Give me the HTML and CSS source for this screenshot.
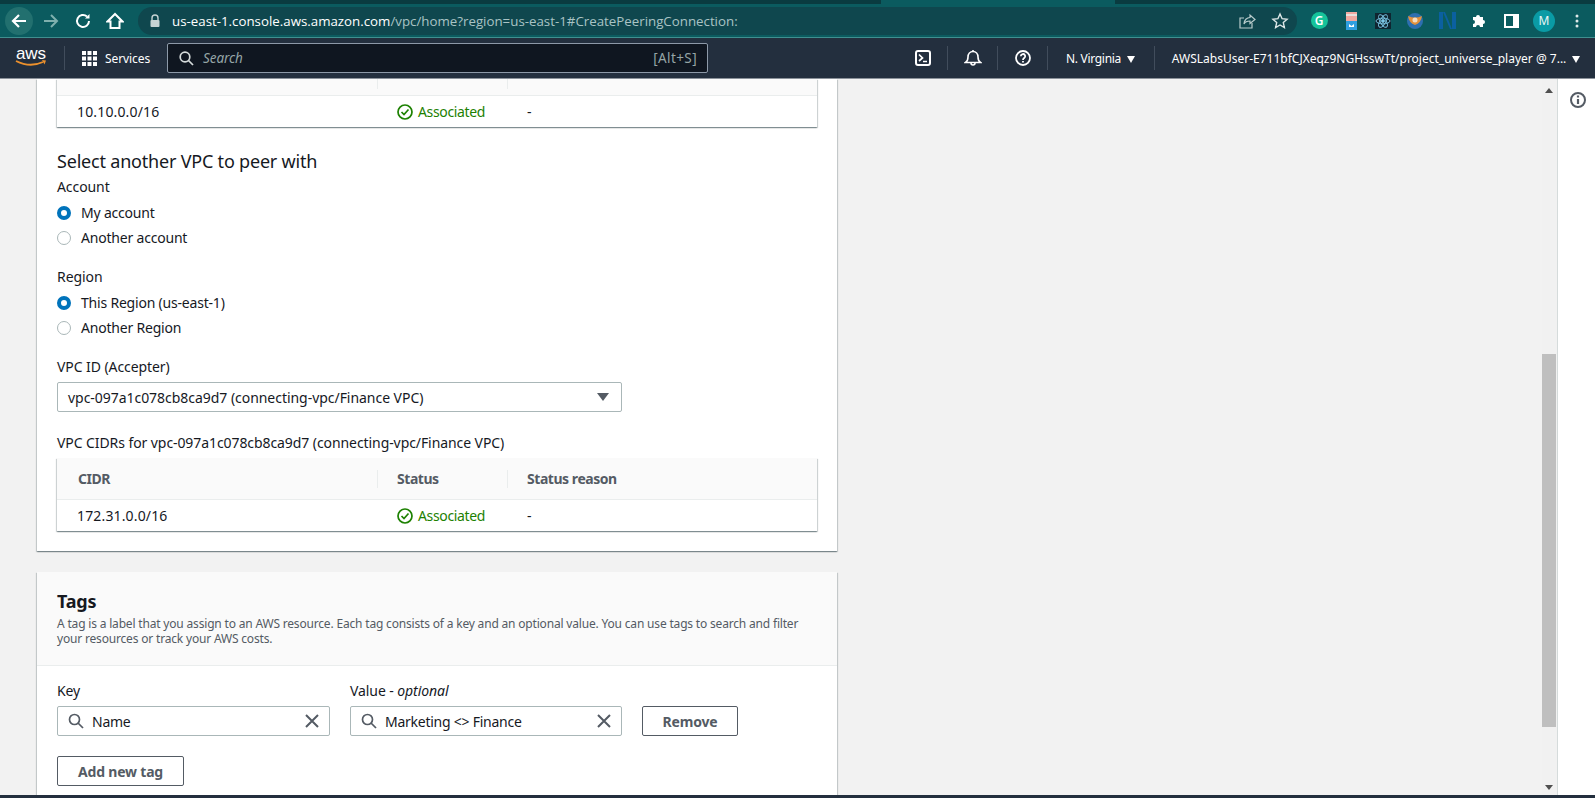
FILE: index.html
```html
<!DOCTYPE html>
<html lang="en">
<head>
    <meta charset="UTF-8">
    <title>Create peering connection</title>
    <link rel="stylesheet" href="styles.css">
</head>
<body>
    <!-- Browser toolbar -->
    <div class="tab-strip"><div class="tab-active"></div></div>
    <div class="browser-bar">
        <div class="nav-btns">
            <span class="nav-btn nav-btn-active">
                <svg width="18" height="18" viewBox="0 0 18 18" fill="none" stroke="#fff" stroke-width="2.200"><path d="M16 9H3M9 3L3 9l6 6"/></svg>
            </span>
            <span class="nav-btn">
                <svg width="18" height="18" viewBox="0 0 18 18" fill="none" stroke="#7fb0ae" stroke-width="2"><path d="M2 9h13M9 3l6 6-6 6"/></svg>
            </span>
            <span class="nav-btn">
                <svg width="18" height="18" viewBox="0 0 18 18" fill="none" stroke="#fff" stroke-width="2"><path d="M15 9a6 6 0 1 1-2-4.500"/><path d="M15.500 2v4.500H11" fill="#fff" stroke="none"/></svg>
            </span>
            <span class="nav-btn">
                <svg width="18" height="18" viewBox="0 0 18 18" fill="none" stroke="#fff" stroke-width="2"><path d="M9 2L1.500 9.500h3V16h9V9.500h3z"/></svg>
            </span>
        </div>
        <div class="url-pill">
            <svg class="lock" width="12" height="14" viewBox="0 0 12 14"><path d="M3 6V4a3 3 0 0 1 6 0v2" fill="none" stroke="#c6d3d3" stroke-width="1.400"/><rect x="1.500" y="6" width="9" height="7" rx="1" fill="#c6d3d3"/></svg>
            <span class="url"><b>us-east-1.console.aws.amazon.com</b>/vpc/home?region=us-east-1#CreatePeeringConnection:</span>
            <span class="pill-icons">
                <svg width="18" height="18" viewBox="0 0 18 18" fill="none" stroke="#b9cccc" stroke-width="1.200"><path d="M14 11v5H2V6h4"/><path d="M6 12c0-4 3-6.500 6-6.500V3l5 4.500-5 4V9c-3 0-5 1-6 3z"/></svg>
                <svg width="18" height="18" viewBox="0 0 18 18" fill="none" stroke="#dfe8e8" stroke-width="1.400"><path d="M9 2l2.100 4.700 5 .5-3.800 3.400 1.100 5L9 13l-4.400 2.600 1.100-5L1.900 7.200l5-.5z"/></svg>
            </span>
        </div>
        <div class="ext-icons">
            <span class="ext ext-g">G</span>
            <span class="ext ext-book">
                <svg width="11" height="18" viewBox="0 0 11 18"><rect width="11" height="9" fill="#f0a9a0"/><rect y="2" width="11" height="2" fill="#e8e0dc"/><rect y="9" width="11" height="9" fill="#2f9fe0"/><path d="M3 12l2.500 2L8 12v3H3z" fill="#fff"/></svg>
            </span>
            <span class="ext ext-react">
                <svg width="16" height="16" viewBox="0 0 16 16" fill="none" stroke="#7cc6e6" stroke-width=".9"><circle cx="8" cy="8" r="1.400" fill="#7cc6e6"/><ellipse cx="8" cy="8" rx="7" ry="2.800"/><ellipse cx="8" cy="8" rx="7" ry="2.800" transform="rotate(60 8 8)"/><ellipse cx="8" cy="8" rx="7" ry="2.800" transform="rotate(120 8 8)"/></svg>
            </span>
            <span class="ext ext-owl">
                <svg width="16" height="16" viewBox="0 0 16 16"><circle cx="8" cy="8" r="8" fill="#2d6fb0"/><path d="M1 3q7 3 14 0-1 7-7 9-6-2-7-9z" fill="#e2913c"/><circle cx="8" cy="7" r="2.500" fill="#f4dcc0"/></svg>
            </span>
            <span class="ext ext-n">
                <svg width="17" height="17" viewBox="0 0 17 17" fill="#0b60a0"><path d="M0 0h4v17H0zM13 0h4v17h-4zM4 0h2l7 17h-2z"/></svg>
            </span>
            <span class="ext">
                <svg width="15" height="15" viewBox="0 0 15 15" fill="#fff"><path d="M1 4h3a2 2 0 0 1 4 0h3v3a2 2 0 0 1 0 4v3H8a2 2 0 0 0-4 0H1v-3a2 2 0 0 0 0-4z"/></svg>
            </span>
            <span class="ext">
                <svg width="15" height="14" viewBox="0 0 15 14"><rect width="15" height="14" fill="#fff"/><rect x="2" y="2" width="7" height="10" fill="#0b5b5f"/></svg>
            </span>
            <span class="avatar">M</span>
            <span class="ext">
                <svg width="4" height="14" viewBox="0 0 4 14" fill="#dfe8e8"><circle cx="2" cy="2" r="1.500"/><circle cx="2" cy="7" r="1.500"/><circle cx="2" cy="12" r="1.500"/></svg>
            </span>
        </div>
    </div>

    <!-- AWS console header -->
    <nav class="aws-nav">
        <div class="aws-logo">
            <span class="aws-word">aws</span>
            <svg width="32" height="7" viewBox="0 0 32 7" fill="none"><path d="M1 1q14 7 27 1" stroke="#ec912d" stroke-width="1.800"/><path d="M27 0l4 .5-1.500 4z" fill="#ec912d"/></svg>
        </div>
        <span class="nav-sep sep-logo"></span>
        <div class="services">
            <svg width="15" height="15" viewBox="0 0 15 15" fill="#fff"><path d="M0 0h4v4H0zM5.500 0h4v4h-4zM11 0h4v4h-4zM0 5.500h4v4H0zM5.500 5.500h4v4h-4zM11 5.500h4v4h-4zM0 11h4v4H0zM5.500 11h4v4h-4zM11 11h4v4h-4z"/></svg>
            <span>Services</span>
        </div>
        <div class="aws-search">
            <svg width="15" height="15" viewBox="0 0 15 15" fill="none" stroke="#d5dbdb" stroke-width="1.700"><circle cx="6" cy="6" r="4.800"/><path d="M9.500 9.500L14 14"/></svg>
            <span class="search-ph">Search</span>
            <span class="search-key">[Alt+S]</span>
        </div>
        <div class="nav-right">
            <span class="nav-icon">
                <svg width="16" height="16" viewBox="0 0 16 16" fill="none" stroke="#fff" stroke-width="2"><rect x="1" y="1" width="14" height="14" rx="2"/><path d="M4 4.500L7.500 8 4 11M8 11.500h4" stroke-width="1.700"/></svg>
            </span>
            <span class="nav-sep"></span>
            <span class="nav-icon">
                <svg width="18" height="18" viewBox="0 0 18 18" fill="none" stroke="#fff" stroke-width="1.600"><path d="M9 1v1.500M1.500 13.500c1.500-1 2.500-2.500 2.500-5.500 0-3.200 2.200-5.500 5-5.500s5 2.300 5 5.500c0 3 1 4.500 2.500 5.500z"/><path d="M7 14a2 2 0 0 0 4 0"/></svg>
            </span>
            <span class="nav-sep"></span>
            <span class="nav-icon">
                <svg width="16" height="16" viewBox="0 0 16 16" fill="none" stroke="#fff" stroke-width="1.800"><circle cx="8" cy="8" r="7"/><path d="M5.800 6.200a2.200 2.200 0 1 1 3.300 1.900C8.300 8.600 8 9 8 10M8 11v1.500"/></svg>
            </span>
            <span class="nav-sep"></span>
            <span class="nav-menu region">N. Virginia <i class="caret"></i></span>
            <span class="nav-sep"></span>
            <span class="nav-menu user">AWSLabsUser-E711bfCJXeqz9NGHsswTt/project_universe_player @ 7... <i class="caret"></i></span>
        </div>
    </nav>

    <div class="main">
        <div class="content">
            <section class="card card-top">
                <div class="table table-cut">
                    <div class="row head head-cut"><div class="cell"></div><div class="cell"></div><div class="cell"></div></div>
                    <div class="row">
                        <div class="cell">10.10.0.0/16</div>
                        <div class="cell status-ok">
                            <svg class="ok-icon" width="16" height="16" viewBox="0 0 16 16" fill="none" stroke="#1d8102" stroke-width="1.700"><circle cx="8" cy="8" r="7"/><path d="M4.500 8l2.500 2.500 4.500-5"/></svg>
                            Associated
                        </div>
                        <div class="cell">-</div>
                    </div>
                </div>

                <h2 class="sub-title">Select another VPC to peer with</h2>
                <div class="label label-first">Account</div>
                <div class="radio-row"><span class="radio radio-on"></span>My account</div>
                <div class="radio-row"><span class="radio"></span>Another account</div>

                <div class="label label-gap">Region</div>
                <div class="radio-row"><span class="radio radio-on"></span>This Region (us-east-1)</div>
                <div class="radio-row"><span class="radio"></span>Another Region</div>

                <div class="label label-gap">VPC ID (Accepter)</div>
                <div class="select-box">
                    <span>vpc-097a1c078cb8ca9d7 (connecting-vpc/Finance VPC)</span>
                    <i class="select-caret"></i>
                </div>

                <div class="label label-cidr">VPC CIDRs for vpc-097a1c078cb8ca9d7 (connecting-vpc/Finance VPC)</div>
                <div class="table">
                    <div class="row head"><div class="cell">CIDR</div><div class="cell">Status</div><div class="cell">Status reason</div></div>
                    <div class="row">
                        <div class="cell">172.31.0.0/16</div>
                        <div class="cell status-ok">
                            <svg class="ok-icon" width="16" height="16" viewBox="0 0 16 16" fill="none" stroke="#1d8102" stroke-width="1.700"><circle cx="8" cy="8" r="7"/><path d="M4.500 8l2.500 2.500 4.500-5"/></svg>
                            Associated
                        </div>
                        <div class="cell">-</div>
                    </div>
                </div>
            </section>

            <section class="card card-tags">
                <div class="tags-header">
                    <h2 class="tags-title">Tags</h2>
                    <p class="tags-desc">A tag is a label that you assign to an AWS resource. Each tag consists of a key and an optional value. You can use tags to search and filter your resources or track your AWS costs.</p>
                </div>
                <div class="tags-body">
                    <div class="tag-row">
                        <div class="tag-field">
                            <div class="label">Key</div>
                            <div class="tag-input">
                                <svg width="16" height="16" viewBox="0 0 16 16" fill="none" stroke="#545b64" stroke-width="1.700"><circle cx="6.500" cy="6.500" r="5"/><path d="M10 10l5 5"/></svg>
                                <span>Name</span>
                                <svg class="clear" width="14" height="14" viewBox="0 0 14 14" fill="none" stroke="#545b64" stroke-width="2"><path d="M1 1l12 12M13 1L1 13"/></svg>
                            </div>
                        </div>
                        <div class="tag-field">
                            <div class="label">Value - <em>optional</em></div>
                            <div class="tag-input">
                                <svg width="16" height="16" viewBox="0 0 16 16" fill="none" stroke="#545b64" stroke-width="1.700"><circle cx="6.500" cy="6.500" r="5"/><path d="M10 10l5 5"/></svg>
                                <span>Marketing &lt;&gt; Finance</span>
                                <svg class="clear" width="14" height="14" viewBox="0 0 14 14" fill="none" stroke="#545b64" stroke-width="2"><path d="M1 1l12 12M13 1L1 13"/></svg>
                            </div>
                        </div>
                        <button class="btn btn-remove">Remove</button>
                    </div>
                    <button class="btn btn-add">Add new tag</button>
                    <p class="tags-hint">You can add 49 more tags.</p>
                </div>
            </section>
        </div>

        <div class="scrollbar">
            <i class="arrow-up"></i>
            <div class="thumb"></div>
            <i class="arrow-down"></i>
        </div>

        <aside class="help-rail">
            <svg width="16" height="16" viewBox="0 0 16 16" fill="none" stroke="#545b64" stroke-width="2"><circle cx="8" cy="8" r="7"/><path d="M8 7v5" stroke-width="2.200"/><path d="M8 3.500v2" stroke-width="2.200"/></svg>
        </aside>
    </div>

    <div class="page-foot"></div>
</body>
</html>
```

FILE: styles.css
```css
* {
    margin: 0;
    padding: 0;
    box-sizing: border-box;
}

html, body {
    height: 100%;
    overflow: hidden;
}

body {
    width: 1595px;
    height: 798px;
    display: flex;
    flex-direction: column;
    background-color: #f2f2f2;
    font-family: "Noto Sans", Roboto, sans-serif;
    font-size: 14px;
    letter-spacing: -0.08px;
    color: #16191f;
}

/* Browser toolbar */
.tab-strip {
    height: 4px;
    background-color: #0a3b40;
    padding-left: 881px;
}

.tab-active {
    width: 234px;
    height: 4px;
    background-color: #0b5b5f;
}

.browser-bar {
    height: 34px;
    display: flex;
    align-items: center;
    background-color: #0b5b5f;
    border-bottom: 1px solid #3f8f8f;
}

.nav-btns {
    display: flex;
    align-items: center;
    flex: none;
    width: 138px;
    padding-left: 3px;
}

.nav-btn {
    width: 32px;
    height: 28px;
    display: flex;
    align-items: center;
    justify-content: center;
    border-radius: 50%;
}

.nav-btn-active {
    background-color: #22706f;
    width: 28px;
    margin: 0 2px;
}

.url-pill {
    flex: none;
    width: 1159px;
    height: 28px;
    display: flex;
    align-items: center;
    background-color: #0f474e;
    border-radius: 14px;
    padding-left: 11px;
}

.url {
    margin-left: 11px;
    font-family: "Open Sans", "Noto Sans", sans-serif;
    font-size: 13.300px;
    letter-spacing: 0;
    color: #a9c3c4;
    white-space: nowrap;
}

.url b {
    font-weight: 400;
    color: #fff;
}

.pill-icons {
    margin-left: auto;
    display: flex;
    gap: 15px;
    padding-right: 8px;
}

.ext-icons {
    display: flex;
    align-items: center;
    flex: none;
    padding-left: 6px;
}

.ext {
    width: 32px;
    height: 24px;
    display: flex;
    align-items: center;
    justify-content: center;
}

.ext-g {
    width: 17px;
    height: 17px;
    margin: 0 7.500px;
    border-radius: 50%;
    background-color: #15c39a;
    color: #fff;
    font-size: 12px;
    font-weight: 600;
}

.ext-react svg {
    background-color: #0f2530;
}

.avatar {
    width: 22px;
    height: 22px;
    margin: 0 6px;
    border-radius: 50%;
    background-color: #0a9ba5;
    color: #eaf6f6;
    font-size: 12px;
    display: flex;
    align-items: center;
    justify-content: center;
}

/* AWS nav */
.aws-nav {
    height: 41px;
    display: flex;
    align-items: center;
    background-color: #232f3e;
    border-bottom: 1px solid #8b929a;
    color: #fff;
    font-size: 12px;
    padding-left: 15px;
}

.aws-logo {
    width: 32px;
    display: flex;
    flex-direction: column;
    line-height: 13px;
    margin-top: -3px;
}

.aws-word {
    font-family: "Liberation Sans", sans-serif;
    font-size: 17px;
    text-align: center;
}

.nav-sep {
    width: 1px;
    height: 24px;
    background-color: #414d5c;
}

.sep-logo {
    margin: 0 17px;
}

.services {
    display: flex;
    align-items: center;
    gap: 8px;
    width: 85px;
}

.aws-search {
    width: 541px;
    height: 30px;
    display: flex;
    align-items: center;
    background-color: #0f1620;
    border: 1px solid #8d99a8;
    border-radius: 2px;
    padding: 0 10px 0 11px;
    color: #95a5a6;
    font-size: 13.500px;
}

.search-ph {
    margin-left: 9px;
    font-style: italic;
}

.search-key {
    margin-left: auto;
    letter-spacing: 0.4px;
}

.nav-right {
    display: flex;
    align-items: center;
    margin-left: 190px;
}

.nav-icon {
    width: 49px;
    display: flex;
    justify-content: center;
}

.nav-menu {
    white-space: nowrap;
}

.region {
    padding: 0 19px 0 18px;
    letter-spacing: -0.3px;
}

.user {
    padding-left: 17px;
    letter-spacing: 0;
}

.caret {
    display: inline-block;
    width: 0;
    height: 0;
    margin-left: 3px;
    border-left: 4.500px solid transparent;
    border-right: 4.500px solid transparent;
    border-top: 7px solid #fff;
}

/* Main layout */
.main {
    flex: 1;
    min-height: 0;
    display: flex;
}

.content {
    width: 1542px;
    padding-left: 37px;
    overflow: hidden;
}

.card {
    width: 800px;
    background-color: #fff;
    box-shadow: 0 1px 1px 0 rgba(0,28,36,0.3), 1px 1px 1px 0 rgba(0,28,36,0.15), -1px 1px 1px 0 rgba(0,28,36,0.15);
}

.card-top {
    padding: 0 20px 20px;
}

.table {
    width: 760px;
    background-color: #fff;
    box-shadow: 0 1px 1px 0 rgba(0,28,36,0.3), 1px 1px 1px 0 rgba(0,28,36,0.15), -1px 1px 1px 0 rgba(0,28,36,0.15);
}

.row {
    display: grid;
    grid-template-columns: 320px 130px 310px;
    height: 31px;
    align-items: center;
}

.head {
    height: 42px;
    background-color: #fafafa;
    border-bottom: 1px solid #eaeded;
    color: #545b64;
    font-weight: 700;
    letter-spacing: -0.45px;
}

.head-cut {
    height: 17px;
}

.cell {
    padding-left: 20px;
}

.cell:first-child {
    letter-spacing: 0.15px;
}

.head .cell:first-child {
    padding-left: 21px;
    letter-spacing: -0.45px;
}

.head .cell + .cell {
    border-left: 1px solid #eaeded;
    height: 18px;
    line-height: 18px;
    padding-left: 19px;
}

.head-cut .cell + .cell {
    height: 10px;
    align-self: start;
}

.status-ok {
    display: flex;
    align-items: center;
    gap: 5px;
    color: #1d8102;
    letter-spacing: -0.35px;
}

.sub-title {
    margin-top: 22px;
    font-size: 18px;
    font-weight: 400;
    line-height: 24px;
    letter-spacing: -0.2px;
}

.label {
    height: 20px;
    line-height: 20px;
}

.label-first {
    margin-top: 4px;
}

.label-gap {
    margin-top: 17px;
}

.label-cidr {
    margin-top: 21px;
    margin-bottom: 5px;
}

.radio-row {
    height: 25px;
    display: flex;
    align-items: center;
    gap: 10px;
    letter-spacing: -0.2px;
}

.label + .radio-row {
    margin-top: 3px;
}

.radio {
    width: 14px;
    height: 14px;
    border: 1px solid #aab7b8;
    border-radius: 50%;
    background-color: #fff;
}

.radio-on {
    border: 4px solid #0073bb;
}

.select-box {
    width: 565px;
    height: 30px;
    margin-top: 5px;
    display: flex;
    align-items: center;
    justify-content: space-between;
    border: 1px solid #aab7b8;
    border-radius: 2px;
    padding: 0 12px 0 10px;
    letter-spacing: -0.04px;
}

.select-caret {
    width: 0;
    height: 0;
    border-left: 6px solid transparent;
    border-right: 6px solid transparent;
    border-top: 8px solid #545b64;
}

/* Tags card */
.card-tags {
    margin-top: 21px;
}

.tags-header {
    background-color: #fafafa;
    border-bottom: 1px solid #eaeded;
    padding: 17px 20px 19px;
}

.tags-title {
    font-size: 18px;
    font-weight: 700;
    line-height: 24px;
    letter-spacing: -0.2px;
    margin-bottom: 3px;
}

.tags-desc {
    font-size: 12px;
    line-height: 15px;
    letter-spacing: -0.18px;
    color: #545b64;
}

.tags-body {
    padding: 15px 20px 20px;
}

.tag-row {
    display: flex;
    align-items: flex-end;
    gap: 20px;
}

.tag-field {
    width: 272px;
}

.tag-field:first-child {
    width: 273px;
}

.tag-field .label {
    margin-bottom: 5px;
}

.tag-input {
    height: 30px;
    display: flex;
    align-items: center;
    border: 1px solid #aab7b8;
    border-radius: 2px;
    padding: 0 10px;
}

.tag-input span {
    margin-left: 8px;
    letter-spacing: -0.25px;
}

.clear {
    margin-left: auto;
}

.btn {
    height: 30px;
    background-color: #fff;
    border: 1px solid #545b64;
    border-radius: 2px;
    color: #545b64;
    font-family: inherit;
    font-size: 14px;
    font-weight: 700;
    letter-spacing: -0.2px;
}

.btn-remove {
    width: 96px;
}

.btn-add {
    display: block;
    width: 127px;
    margin-top: 20px;
}

.tags-hint {
    margin-top: 7px;
    font-size: 12px;
    color: #687078;
}

/* Scrollbar and help rail */
.scrollbar {
    width: 15px;
    padding-top: 9px;
    position: relative;
    background-color: #f1f1f1;
}

.arrow-up, .arrow-down {
    display: block;
    width: 0;
    height: 0;
    margin-left: 3px;
    border-left: 4px solid transparent;
    border-right: 4px solid transparent;
}

.arrow-up {
    border-bottom: 5px solid #505050;
}

.arrow-down {
    position: absolute;
    bottom: 5px;
    border-top: 5px solid #505050;
}

.thumb {
    width: 14px;
    height: 373px;
    margin-top: 261px;
    background-color: #bfbfbf;
}

.help-rail {
    width: 38px;
    background-color: #fff;
    border-left: 1px solid #d5dbdb;
    padding: 13px 0 0 12px;
}

.page-foot {
    height: 3px;
    background-color: #232f3e;
}
```
